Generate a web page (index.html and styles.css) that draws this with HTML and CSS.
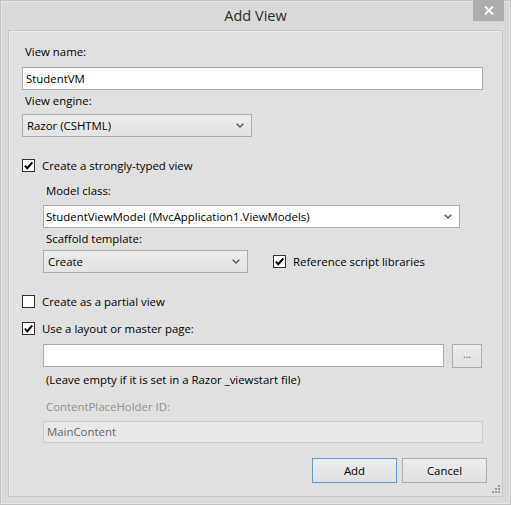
FILE: index.html
```html
<!DOCTYPE html>
<html lang="en">
<head>
<meta charset="utf-8">
<title>Add View</title>
<link rel="stylesheet" href="styles.css">
</head>
<body>
<div class="window">
  <div class="titlebar">
    <span class="title">Add View</span>
    <div class="close">
      <svg width="10" height="9" viewBox="0 0 10 9"><path d="M1 0.5 L9 8.5 M9 0.5 L1 8.5" stroke="#fff" stroke-width="1.8" fill="none"/></svg>
    </div>
  </div>

  <div class="client">
    <div class="lbl">View name:</div>
    <div class="textbox gap-7">StudentVM</div>

    <div class="lbl gap-3">View engine:</div>
    <div class="select engine gap-5">
      <span>Razor (CSHTML)</span>
      <svg class="chev" width="8" height="5" viewBox="0 0 8 5"><path d="M0.7 0.7 L4 4 L7.3 0.7" stroke="#555" stroke-width="1.4" fill="none"/></svg>
    </div>

    <div class="check gap-20">
      <span class="box on"><svg width="11" height="11" viewBox="0 0 11 11"><path d="M1.8 5.6 L4.3 8.2 L9.3 2.3" stroke="#000" stroke-width="2" fill="none"/></svg></span>
      <span>Create a strongly-typed view</span>
    </div>

    <div class="indent">
      <div class="lbl gap-10">Model class:</div>
      <div class="select combo model gap-6">
        <span>StudentViewModel (MvcApplication1.ViewModels)</span>
        <svg class="chev" width="8" height="5" viewBox="0 0 8 5"><path d="M0.7 0.7 L4 4 L7.3 0.7" stroke="#555" stroke-width="1.4" fill="none"/></svg>
      </div>

      <div class="lbl gap-3">Scaffold template:</div>
      <div class="row scaffold-row gap-3">
        <div class="select scaffold">
          <span>Create</span>
          <svg class="chev" width="8" height="5" viewBox="0 0 8 5"><path d="M0.7 0.7 L4 4 L7.3 0.7" stroke="#555" stroke-width="1.4" fill="none"/></svg>
        </div>
        <div class="check">
          <span class="box on"><svg width="11" height="11" viewBox="0 0 11 11"><path d="M1.8 5.6 L4.3 8.2 L9.3 2.3" stroke="#000" stroke-width="2" fill="none"/></svg></span>
          <span>Reference script libraries</span>
        </div>
      </div>
    </div>

    <div class="check gap-20">
      <span class="box"></span>
      <span>Create as a partial view</span>
    </div>

    <div class="check gap-11">
      <span class="box on"><svg width="11" height="11" viewBox="0 0 11 11"><path d="M1.8 5.6 L4.3 8.2 L9.3 2.3" stroke="#000" stroke-width="2" fill="none"/></svg></span>
      <span>Use a layout or master page:</span>
    </div>

    <div class="indent">
      <div class="row layout-row gap-8">
        <div class="textbox layout"></div>
        <div class="browse">...</div>
      </div>
      <div class="lbl gap-4">(Leave empty if it is set in a Razor _viewstart file)</div>
      <div class="lbl disabled gap-11">ContentPlaceHolder ID:</div>
      <div class="textbox off gap-6">MainContent</div>
    </div>

    <div class="buttons gap-15">
      <div class="btn default">Add</div>
      <div class="btn">Cancel</div>
    </div>

    <svg class="grip" width="8" height="8" viewBox="0 0 8 8" fill="#9a9a9a">
      <rect x="6" y="0" width="2" height="2"/>
      <rect x="3" y="3" width="2" height="2"/><rect x="6" y="3" width="2" height="2"/>
      <rect x="0" y="6" width="2" height="2"/><rect x="3" y="6" width="2" height="2"/><rect x="6" y="6" width="2" height="2"/>
    </svg>
  </div>
</div>
</body>
</html>
```

FILE: styles.css
```css
* { box-sizing: border-box; }

body {
  margin: 0;
  background: #d9d9d9;
  font-family: "Open Sans", "Noto Sans", sans-serif;
  font-size: 11.4px;
  color: #000;
}

/* window frame */
.window {
  position: relative;
  width: 511px;
  height: 505px;
  background: #d9d9d9;
  border: 1px solid #c2c2c2;
  box-shadow: inset 1px 1px 0 #e6e6e6, inset -1px -1px 0 #e6e6e6;
  padding: 0 7px 7px 7px;
  display: flex;
  flex-direction: column;
}

.titlebar {
  height: 29px;
  display: flex;
  align-items: center;
  justify-content: center;
}

.title {
  font-size: 14.5px;
  color: #2b2b2b;
  padding-bottom: 1px;
}

.close {
  position: absolute;
  top: -1px;
  right: 6px;
  width: 31px;
  height: 21px;
  background: #adadad;
  display: flex;
  align-items: center;
  justify-content: center;
}

/* client area */
.client {
  position: relative;
  flex: 1;
  background: #e0e0e0;
  border: 1px solid #c6c6c6;
  box-shadow: inset 1px 1px 0 #ebebeb;
  padding: 13px 19px 0 13px;
  display: flex;
  flex-direction: column;
  align-items: flex-start;
}

.indent {
  margin-left: 21px;
  display: flex;
  flex-direction: column;
  align-items: flex-start;
  align-self: stretch;
}

.gap-3 { margin-top: 3px; }
.gap-4 { margin-top: 4px; }
.gap-5 { margin-top: 5px; }
.gap-6 { margin-top: 6px; }
.gap-7 { margin-top: 7px; }
.gap-8 { margin-top: 8px; }
.gap-10 { margin-top: 10px; }
.gap-11 { margin-top: 11px; }
.gap-15 { margin-top: 15px; }
.gap-20 { margin-top: 20px; }

.lbl {
  height: 16px;
  line-height: 16px;
  padding-left: 3px;
  white-space: nowrap;
}

.lbl.disabled { color: #8e8e8e; }

/* text boxes */
.textbox {
  align-self: stretch;
  height: 23px;
  line-height: 21px;
  background: #fff;
  border: 1px solid #ababab;
  padding-left: 3px;
}

.textbox.layout {
  flex: 1;
  height: 23px;
}

.textbox.off {
  height: 22px;
  line-height: 20px;
  background: #e8e8e8;
  border-color: #c9c9c9;
  color: #666;
}

/* drop-down lists */
.select {
  height: 23px;
  display: flex;
  align-items: center;
  justify-content: space-between;
  padding: 0 7px 0 4px;
  border: 1px solid #acacac;
  background: linear-gradient(#ececec, #e3e3e3);
  white-space: nowrap;
}

.select.engine { width: 230px; }
.select.scaffold { width: 205px; }

.select.combo {
  background: #fff;
  border-color: #ababab;
  padding-left: 2px;
}

.select.model { width: 417px; }

.chev { flex: none; }

.row {
  display: flex;
  align-items: center;
  align-self: stretch;
}

.scaffold-row { gap: 25px; }
.layout-row { gap: 8px; }

/* check boxes */
.check {
  height: 16px;
  display: flex;
  align-items: center;
  gap: 7px;
  white-space: nowrap;
}

.box {
  width: 13px;
  height: 13px;
  border: 1px solid #333;
  background: #fff;
  display: flex;
  align-items: center;
  justify-content: center;
  flex: none;
}

.browse {
  width: 30px;
  height: 24px;
  border: 1px solid #acacac;
  background: linear-gradient(#ececec, #e1e1e1);
  color: #555;
  font-size: 10px;
  text-align: center;
  line-height: 18px;
  flex: none;
  margin-right: 1px;
}

/* dialog buttons */
.buttons {
  align-self: stretch;
  margin-right: -4px;
  display: flex;
  justify-content: flex-end;
  gap: 5px;
}

.btn {
  width: 85px;
  height: 25px;
  line-height: 23px;
  text-align: center;
  border: 1px solid #acacac;
  background: linear-gradient(#ececec, #e0e0e0);
}

.btn.default { border-color: #5f9bd3; }

.grip {
  position: absolute;
  right: 2px;
  bottom: 3px;
}
```
